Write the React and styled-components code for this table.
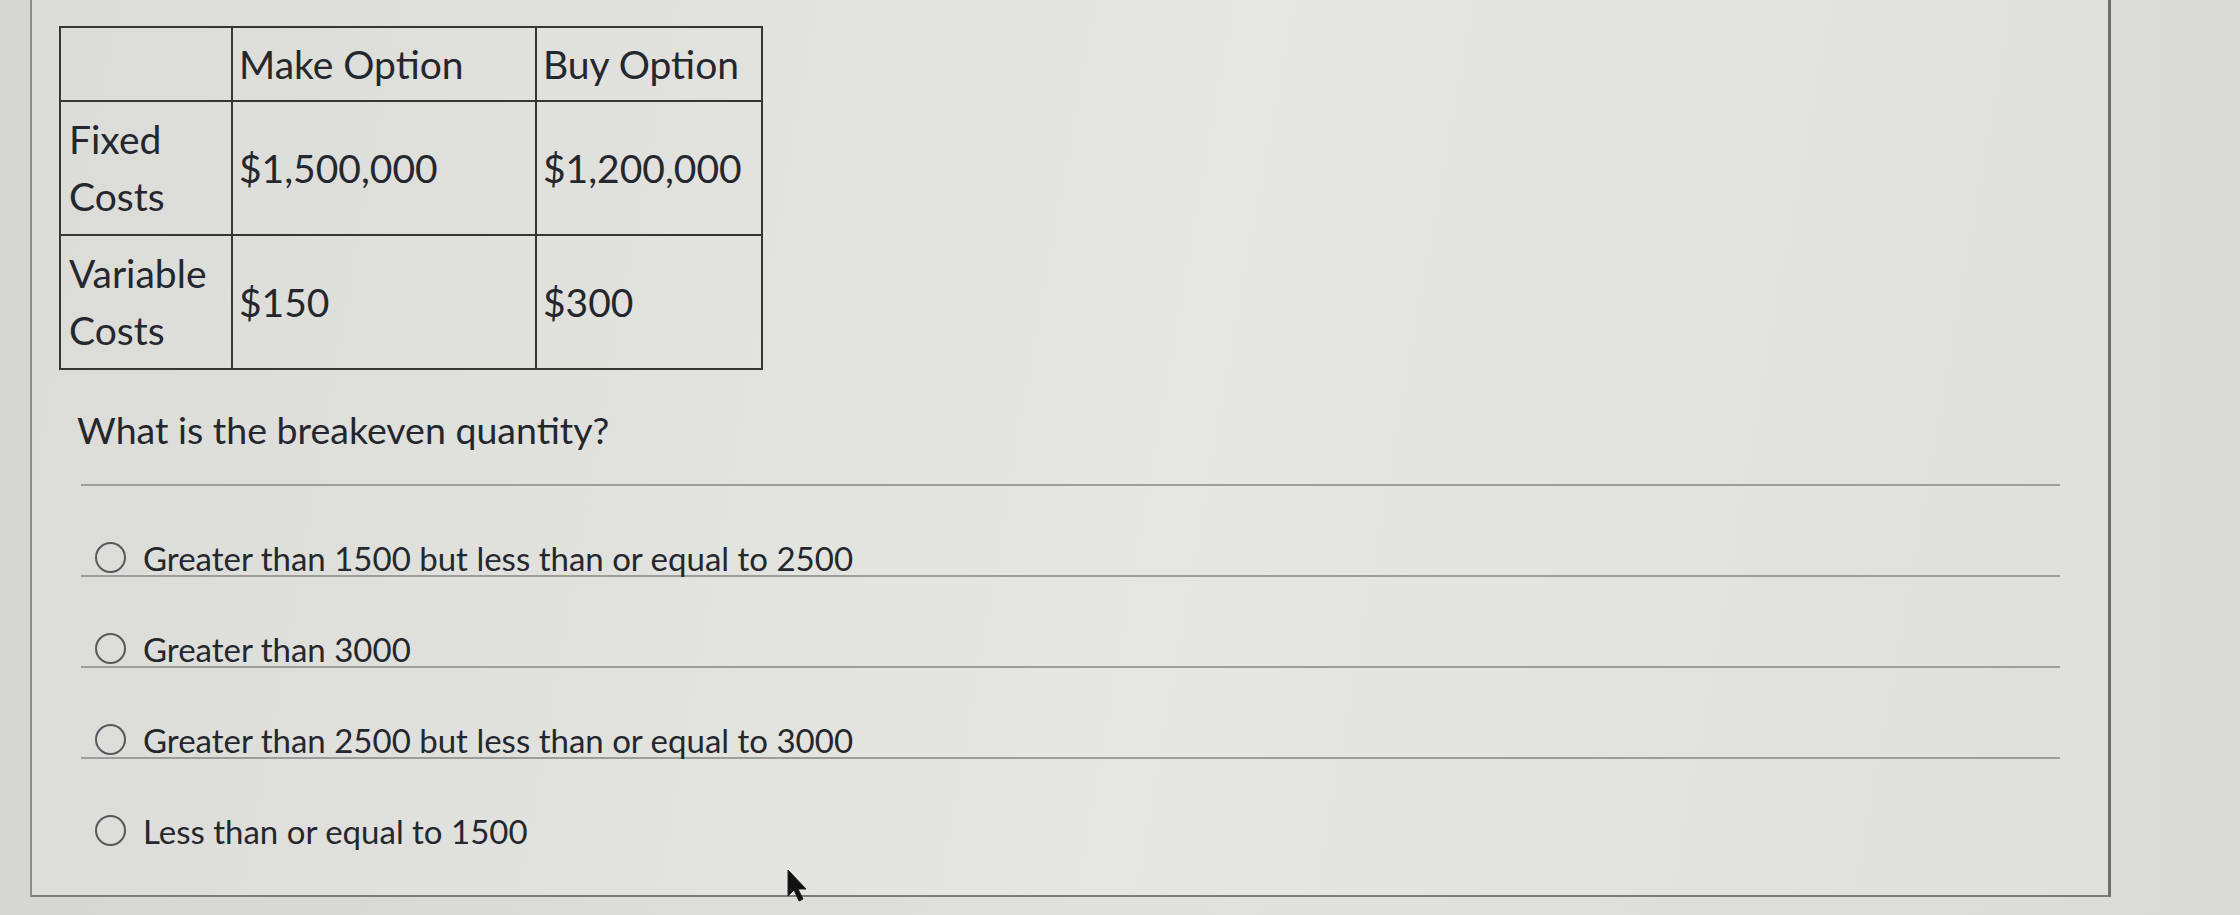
import React from "react";
import styled, { createGlobalStyle } from "styled-components";

const GlobalStyle = createGlobalStyle`
  html, body {
    margin: 0;
    padding: 0;
    background: #d8d8d4;
    font-family: Lato, "Open Sans", sans-serif;
    color: #24272d;
  }
`;

const Page = styled.div`
  position: relative;
  width: 2240px;
  height: 915px;
  overflow: hidden;
  background: linear-gradient(90deg, #d6d6d2 0%, #dcdcd8 30%, #e1e1de 55%, #dadad6 100%);
  padding-left: 30px;
  box-sizing: border-box;
`;

const Card = styled.div`
  position: relative;
  width: 2081px;
  height: 897px;
  box-sizing: border-box;
  border-left: 2px solid #8c8c8a;
  border-right: 3px solid #6f6f6f;
  border-bottom: 2px solid #7c7c7b;
  background: linear-gradient(100deg, #dbdbd7 0%, #e2e2df 35%, #e6e6e3 55%, #dfdfdb 100%);
  padding: 26px 0 0 27px;
`;

const Table = styled.table`
  border-collapse: collapse;
  font-size: 39px;
  line-height: 57px;
  color: #24272d;
  td {
    border: 2.5px solid #363636;
    vertical-align: middle;
    padding: 0 6px;
  }
`;

const HeadCell = styled.td`
  width: ${(p) => p.$w}px;
  height: 72px;
`;

const LabelCell = styled.td`
  width: 154px;
  height: 124px;
  padding: 4px 8px !important;
`;

const Question = styled.div`
  margin: 38px 0 0 18px;
  font-size: 37.5px;
  line-height: 44px;
  color: #24272d;
`;

const Options = styled.div`
  margin: 32px 0 0 22px;
  width: 1979px;
`;

const Option = styled.label`
  display: flex;
  align-items: center;
  gap: 17px;
  height: 91px;
  box-sizing: border-box;
  border-top: 2px solid #9d9d9b;
  padding: 54px 0 0 14px;
  font-size: 33px;
  line-height: 36px;
  color: #24272d;
`;

const Radio = styled.span`
  width: 27px;
  height: 27px;
  border-radius: 50%;
  border: 2.5px solid #55585c;
  flex: none;
`;

const Cursor = styled.svg`
  position: absolute;
  left: 786px;
  top: 868px;
`;

const options = [
  "Greater than 1500 but less than or equal to 2500",
  "Greater than 3000",
  "Greater than 2500 but less than or equal to 3000",
  "Less than or equal to 1500",
];

export default function App() {
  return (
    <>
      <GlobalStyle />
      <Page>
        <Card>
          <Table>
            <tbody>
              <tr>
                <HeadCell $w={154}></HeadCell>
                <HeadCell $w={290}>Make Option</HeadCell>
                <HeadCell $w={212}>Buy Option</HeadCell>
              </tr>
              <tr>
                <LabelCell>Fixed Costs</LabelCell>
                <td>$1,500,000</td>
                <td>$1,200,000</td>
              </tr>
              <tr>
                <LabelCell>Variable Costs</LabelCell>
                <td>$150</td>
                <td>$300</td>
              </tr>
            </tbody>
          </Table>
          <Question>What is the breakeven quantity?</Question>
          <Options>
            {options.map((o) => (
              <Option key={o}>
                <Radio />
                {o}
              </Option>
            ))}
          </Options>
        </Card>
        <Cursor width="24" height="36" viewBox="0 0 24 36">
          <path d="M2 2 L2 28 L8 22 L13 33 L17 31 L12 21 L20 21 Z" fill="#111" stroke="#222" strokeWidth="1" />
        </Cursor>
      </Page>
    </>
  );
}
